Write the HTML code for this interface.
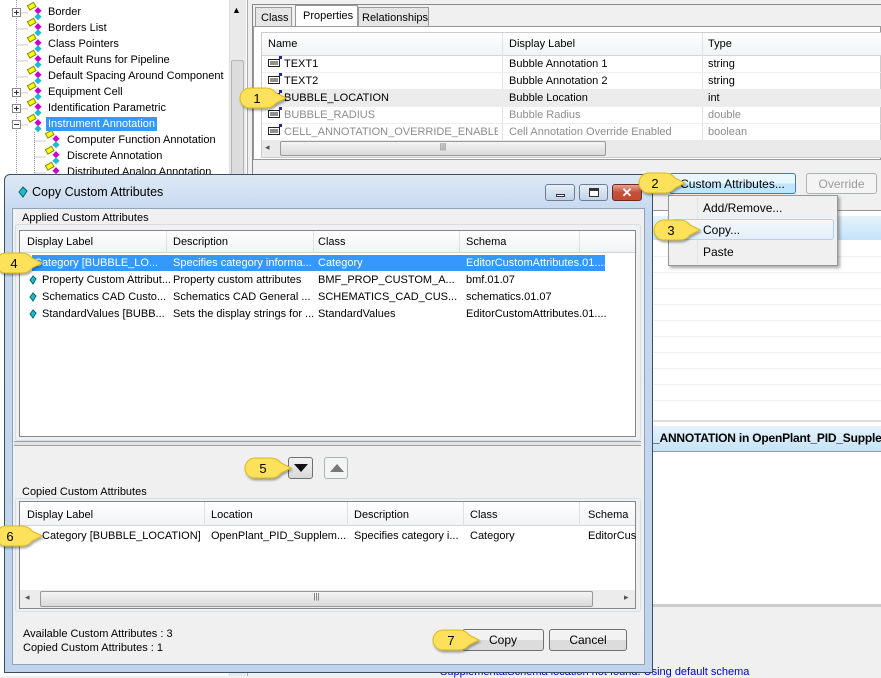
<!DOCTYPE html>
<html><head><style>
*{box-sizing:border-box;margin:0;padding:0}
body{width:881px;height:676px;position:relative;overflow:hidden;background:#f0f0f0;font-family:"Liberation Sans",sans-serif;font-size:11px;color:#000}
.a{position:absolute;white-space:nowrap}
.t{font-size:11px}
.gray{color:#8d8d8d}
.hdr{background:linear-gradient(#fff,#f2f3f5);border-bottom:1px solid #d5d5d5}
.btn{position:absolute;border:1px solid #707070;border-radius:3px;background:linear-gradient(#f2f2f2 50%,#dcdcdc 50%);text-align:center;font-size:12px}
</style></head><body>
<!-- left tree -->
<div class="a" style="left:0;top:0;width:248px;height:676px;background:#fff;border-right:1px solid #aaa"></div>
<div class="a" style="left:229px;top:0;width:17px;height:676px;background:#eaeaea;border-left:1px solid #ddd"></div>
<div class="a" style="left:231px;top:60px;width:13px;height:120px;background:#dcdcdc;border:1px solid #b5b5b5;border-radius:2px"></div>
<div class="a" style="left:232px;top:5px;font-size:9px">▲</div>
<svg class="a" style="left:0;top:0" width="230" height="180">
<g stroke="#999" stroke-dasharray="1,1" fill="none">
<path d="M16.5 0V180M16.5 13H28M16.5 29H28M16.5 45H28M16.5 61H28M16.5 77H28M16.5 93H28M16.5 109H28M16.5 125H28M34.5 132V180M34.5 141H46M34.5 157H46M34.5 173H46"/></g>
<g fill="#fff" stroke="#888"><rect x="12.5" y="8.5" width="8" height="8"/><rect x="12.5" y="88.5" width="8" height="8"/><rect x="12.5" y="104.5" width="8" height="8"/><rect x="12.5" y="120.5" width="8" height="8"/></g>
<g stroke="#333"><path d="M14 12.5h5M16.5 10v5M14 92.5h5M16.5 90v5M14 108.5h5M16.5 106v5M14 124.5h5"/></g>
<g id="n"><rect x="28" y="4" width="7" height="5" fill="#ff0" stroke="#880" transform="rotate(-30 31 6)"/><rect x="36" y="8" width="5" height="5" fill="#c0c" transform="rotate(45 38 10)"/><rect x="36" y="14" width="5" height="5" fill="#2bc" transform="rotate(45 38 16)"/></g>
<use href="#n" y="16"/><use href="#n" y="32"/><use href="#n" y="48"/><use href="#n" y="64"/><use href="#n" y="80"/><use href="#n" y="96"/><use href="#n" y="112"/>
<use href="#n" x="18" y="128"/><use href="#n" x="18" y="144"/><use href="#n" x="18" y="160"/>
</svg>
<div class="a t" style="left:48px;top:6px">Border</div>
<div class="a t" style="left:48px;top:22px">Borders List</div>
<div class="a t" style="left:48px;top:38px">Class Pointers</div>
<div class="a t" style="left:48px;top:54px">Default Runs for Pipeline</div>
<div class="a t" style="left:48px;top:70px">Default Spacing Around Component</div>
<div class="a t" style="left:48px;top:86px">Equipment Cell</div>
<div class="a t" style="left:48px;top:102px">Identification Parametric</div>
<div class="a t" style="left:46px;top:117px;background:#3399ff;color:#fff;padding:1px 2px">Instrument Annotation</div>
<div class="a t" style="left:67px;top:134px">Computer Function Annotation</div>
<div class="a t" style="left:67px;top:150px">Discrete Annotation</div>
<div class="a t" style="left:67px;top:166px">Distributed Analog Annotation</div>

<!-- right panel -->
<div class="a" style="left:252px;top:4px;width:629px;height:172px;background:#f0f0f0;border-left:1px solid #888;border-top:1px solid #888"></div>
<div class="a t" style="left:255px;top:7px;width:37px;height:20px;border:1px solid #999;background:#e5e5e5;padding:4px 5px">Class</div>
<div class="a t" style="left:295px;top:5px;width:63px;height:22px;border:1px solid #999;border-bottom:none;background:#fff;padding:4px 7px">Properties</div>
<div class="a t" style="left:358px;top:7px;width:71px;height:20px;border:1px solid #999;background:#e5e5e5;padding:4px 3px">Relationships</div>
<div class="a" style="left:253px;top:26px;width:628px;height:134px;background:#fff;border:1px solid #999"></div>
<div class="a" style="left:261px;top:32px;width:620px;height:126px;background:#fff;border:1px solid #ccc"></div>
<div class="a hdr" style="left:262px;top:33px;width:619px;height:23px"></div>
<div class="a" style="left:502px;top:33px;width:1px;height:107px;background:#e2e2e2"></div>
<div class="a" style="left:702px;top:33px;width:1px;height:107px;background:#e2e2e2"></div>
<div class="a" style="left:262px;top:89px;width:619px;height:17px;background:#ececec"></div>
<div class="a" style="left:262px;top:72px;width:619px;height:1px;background:#eee"></div>
<div class="a" style="left:262px;top:106px;width:619px;height:1px;background:#eee"></div>
<div class="a" style="left:262px;top:123px;width:619px;height:1px;background:#eee"></div>
<div class="a t" style="left:268px;top:38px">Name</div><div class="a t" style="left:509px;top:38px">Display Label</div><div class="a t" style="left:708px;top:38px">Type</div>
<svg class="a" style="left:266px;top:56px" width="18" height="85"><g id="p" fill="#fff" stroke="#222"><rect x="2.5" y="3.5" width="11" height="7"/><path d="M4 6h8M4 8h8" /><rect x="13" y="0" width="3" height="3" fill="#22a" stroke="none"/></g><use href="#p" y="17"/><use href="#p" y="34"/><use href="#p" y="51"/><use href="#p" y="68"/></svg>
<div class="a t" style="left:284px;top:58px">TEXT1</div><div class="a t" style="left:509px;top:58px">Bubble Annotation 1</div><div class="a t" style="left:708px;top:58px">string</div>
<div class="a t" style="left:284px;top:75px">TEXT2</div><div class="a t" style="left:509px;top:75px">Bubble Annotation 2</div><div class="a t" style="left:708px;top:75px">string</div>
<div class="a t" style="left:284px;top:92px">BUBBLE_LOCATION</div><div class="a t" style="left:509px;top:92px">Bubble Location</div><div class="a t" style="left:708px;top:92px">int</div>
<div class="a t gray" style="left:284px;top:109px">BUBBLE_RADIUS</div><div class="a t gray" style="left:509px;top:109px">Bubble Radius</div><div class="a t gray" style="left:708px;top:109px">double</div>
<div class="a t gray" style="left:284px;top:126px;width:214px;overflow:hidden">CELL_ANNOTATION_OVERRIDE_ENABLED</div><div class="a t gray" style="left:509px;top:126px">Cell Annotation Override Enabled</div><div class="a t gray" style="left:708px;top:126px">boolean</div>
<div class="a" style="left:262px;top:140px;width:619px;height:17px;background:#eaeaea"></div>
<div class="a" style="left:280px;top:141px;width:326px;height:15px;background:linear-gradient(#f4f4f4,#dadada);border:1px solid #999;border-radius:2px;font-size:8px;text-align:center;color:#555">|||</div>
<div class="a" style="left:265px;top:142px;font-size:9px;color:#555">◂</div>

<div class="btn" style="left:669px;top:173px;width:127px;height:21px;border-color:#3c7fb1;background:linear-gradient(#eaf6fd 50%,#bee6fd 50%);padding-top:3px">Custom Attributes...</div>
<div class="btn" style="left:806px;top:173px;width:71px;height:21px;border-color:#adb2b5;background:#f4f4f4;color:#9a9a9a;padding-top:3px">Override</div>

<!-- right lower list -->
<div class="a" style="left:651px;top:210px;width:230px;height:394px;background:#fff;border-top:1px solid #999"></div>
<div class="a" style="left:651px;top:216px;width:230px;height:24px;background:linear-gradient(#e6f3fc,#c4e3f8)"></div>
<svg class="a" style="left:651px;top:240px" width="230" height="180"><g stroke="#eef0f6"><path d="M0 16.5H230M0 32.5H230M0 48.5H230M0 64.5H230M0 80.5H230M0 96.5H230M0 112.5H230M0 128.5H230M0 144.5H230M0 160.5H230"/></g></svg>
<div class="a" style="left:651px;top:420px;width:230px;height:2px;background:#ddd"></div>
<div class="a" style="left:651px;top:426px;width:230px;height:26px;background:linear-gradient(#e6f3fc,#c4e3f8);border-bottom:1px solid #999;font-weight:bold;font-size:12px;padding:5px 0 0 2px;letter-spacing:-0.2px">_ANNOTATION in OpenPlant_PID_Supplemental</div>
<div class="a" style="left:651px;top:604px;width:230px;height:3px;background:#ccc"></div>
<div class="a" style="left:440px;top:666px;font-size:11px;color:#00c">SupplementalSchema location not found. Using default schema</div>

<!-- context menu -->
<div class="a" style="left:668px;top:195px;width:170px;height:71px;background:#f0f0f0;border:1px solid #979797;box-shadow:2px 2px 3px rgba(0,0,0,.35)"></div>
<div class="a" style="left:697px;top:197px;width:1px;height:67px;background:#e2e3e3"></div>
<div class="a" style="left:671px;top:219px;width:163px;height:21px;border:1px solid #a8d8f8;border-radius:3px;background:linear-gradient(#f3f8fd,#e4eef9)"></div>
<div class="a" style="left:703px;top:201px;font-size:12px">Add/Remove...</div>
<div class="a" style="left:703px;top:223px;font-size:12px">Copy...</div>
<div class="a" style="left:703px;top:245px;font-size:12px">Paste</div>

<!-- dialog -->
<div class="a" style="left:4px;top:174px;width:649px;height:499px;background:linear-gradient(#dde8f5,#c5d8ee 40px,#bfd4ec);border:1px solid #3a4e66;border-radius:6px 6px 0 0"></div>
<div class="a" style="left:12px;top:208px;width:633px;height:457px;background:#f0f0f0;border:1px solid #8ea4bc"></div>
<svg class="a" style="left:17px;top:186px" width="12" height="12"><path d="M2 6L6 1L10 5L6 11Z" fill="#2bc" stroke="#066"/></svg>
<div class="a" style="left:32px;top:185px;font-size:12.5px">Copy Custom Attributes</div>
<div class="a" style="left:545px;top:184px;width:30px;height:17px;border:1px solid #6d7f94;border-radius:3px;background:linear-gradient(#e6eef8,#c2d3e7)"><div class="a" style="left:10px;top:9px;width:9px;height:3px;border:1px solid #333;background:#fff"></div></div>
<div class="a" style="left:579px;top:184px;width:29px;height:17px;border:1px solid #6d7f94;border-radius:3px;background:linear-gradient(#e6eef8,#c2d3e7)"><div class="a" style="left:9px;top:3px;width:10px;height:9px;border:1px solid #333;border-top-width:3px;background:#fff"></div></div>
<div class="a" style="left:612px;top:184px;width:30px;height:17px;border:1px solid #6b2a22;border-radius:3px;background:linear-gradient(#e8a393,#c4503a 50%,#c24a33);color:#fff;font-weight:bold;font-size:13px;text-align:center;line-height:15px">✕</div>

<div class="a" style="left:15px;top:224px;width:626px;height:217px;border:1px solid #d5dfe5;border-radius:3px"></div>
<div class="a" style="left:20px;top:212px;background:#f0f0f0;padding:0 2px">Applied Custom Attributes</div>
<div class="a" style="left:19px;top:230px;width:617px;height:207px;background:#fff;border:1px solid #828790"></div>
<div class="a hdr" style="left:20px;top:231px;width:615px;height:22px"></div>
<div class="a" style="left:166px;top:231px;width:1px;height:22px;background:#e0e0e0"></div><div class="a" style="left:313px;top:231px;width:1px;height:22px;background:#e0e0e0"></div><div class="a" style="left:459px;top:231px;width:1px;height:22px;background:#e0e0e0"></div><div class="a" style="left:579px;top:231px;width:1px;height:22px;background:#e0e0e0"></div>
<div class="a" style="left:27px;top:236px">Display Label</div><div class="a" style="left:173px;top:236px">Description</div><div class="a" style="left:318px;top:236px">Class</div><div class="a" style="left:466px;top:236px">Schema</div>
<div class="a" style="left:32px;top:255px;width:573px;height:16px;background:#3399ff"></div>
<div class="a" style="left:34px;top:257px;color:#fff">Category [BUBBLE_LO...</div><div class="a" style="left:173px;top:257px;color:#fff">Specifies category informa...</div><div class="a" style="left:318px;top:257px;color:#fff">Category</div><div class="a" style="left:466px;top:257px;color:#fff">EditorCustomAttributes.01....</div>
<svg class="a" style="left:28px;top:275px" width="10" height="50"><g id="d" fill="#2bc" stroke="#066"><path d="M2 5L5 1L8 4L5 9Z"/></g><use href="#d" y="17"/><use href="#d" y="34"/></svg>
<div class="a" style="left:42px;top:274px">Property Custom Attribut...</div><div class="a" style="left:173px;top:274px">Property custom attributes</div><div class="a" style="left:318px;top:274px">BMF_PROP_CUSTOM_A...</div><div class="a" style="left:466px;top:274px">bmf.01.07</div>
<div class="a" style="left:42px;top:291px">Schematics CAD Custo...</div><div class="a" style="left:173px;top:291px">Schematics CAD General ...</div><div class="a" style="left:318px;top:291px">SCHEMATICS_CAD_CUS...</div><div class="a" style="left:466px;top:291px">schematics.01.07</div>
<div class="a" style="left:42px;top:308px">StandardValues [BUBB...</div><div class="a" style="left:173px;top:308px">Sets the display strings for ...</div><div class="a" style="left:318px;top:308px">StandardValues</div><div class="a" style="left:466px;top:308px">EditorCustomAttributes.01....</div>

<div class="a" style="left:14px;top:441px;width:627px;height:5px;border-top:1px solid #a0a0a0;border-bottom:1px solid #a0a0a0;background:#e3e3e3"></div>
<div class="a" style="left:288px;top:457px;width:25px;height:22px;border:1px solid #707070;border-radius:3px;background:linear-gradient(#f2f2f2,#d8d8d8)"><div class="a" style="left:5px;top:6px;width:0;height:0;border-left:7px solid transparent;border-right:7px solid transparent;border-top:8px solid #111"></div></div>
<div class="a" style="left:324px;top:457px;width:24px;height:22px;border:1px solid #adb2b5;border-radius:3px;background:#f4f4f4"><div class="a" style="left:5px;top:6px;width:0;height:0;border-left:7px solid transparent;border-right:7px solid transparent;border-bottom:8px solid #777"></div></div>

<div class="a" style="left:15px;top:498px;width:626px;height:114px;border:1px solid #d5dfe5;border-radius:3px"></div>
<div class="a" style="left:20px;top:486px;background:#f0f0f0;padding:0 2px">Copied Custom Attributes</div>
<div class="a" style="left:19px;top:501px;width:617px;height:108px;background:#fff;border:1px solid #828790"></div>
<div class="a hdr" style="left:20px;top:502px;width:615px;height:24px"></div>
<div class="a" style="left:204px;top:502px;width:1px;height:24px;background:#e0e0e0"></div><div class="a" style="left:347px;top:502px;width:1px;height:24px;background:#e0e0e0"></div><div class="a" style="left:463px;top:502px;width:1px;height:24px;background:#e0e0e0"></div><div class="a" style="left:579px;top:502px;width:1px;height:24px;background:#e0e0e0"></div>
<div class="a" style="left:27px;top:509px">Display Label</div><div class="a" style="left:211px;top:509px">Location</div><div class="a" style="left:354px;top:509px">Description</div><div class="a" style="left:470px;top:509px">Class</div><div class="a" style="left:588px;top:509px">Schema</div>
<div class="a" style="left:42px;top:530px">Category [BUBBLE_LOCATION]</div><div class="a" style="left:211px;top:530px">OpenPlant_PID_Supplem...</div><div class="a" style="left:354px;top:530px">Specifies category i...</div><div class="a" style="left:470px;top:530px">Category</div><div class="a" style="left:588px;top:530px">EditorCus</div>
<div class="a" style="left:20px;top:590px;width:615px;height:18px;background:#ececec"></div>
<div class="a" style="left:40px;top:591px;width:553px;height:16px;background:linear-gradient(#f4f4f4,#dadada);border:1px solid #999;border-radius:2px;font-size:8px;text-align:center;color:#555">|||</div>
<div class="a" style="left:25px;top:592px;font-size:9px;color:#555">◂</div><div class="a" style="left:624px;top:592px;font-size:9px;color:#555">▸</div>

<div class="a" style="left:23px;top:628px">Available Custom Attributes : 3</div>
<div class="a" style="left:23px;top:642px">Copied Custom Attributes : 1</div>
<div class="btn" style="left:462px;top:629px;width:82px;height:22px;padding-top:3px">Copy</div>
<div class="btn" style="left:549px;top:629px;width:78px;height:22px;padding-top:3px">Cancel</div>

<!-- callouts -->
<svg class="a" style="left:0;top:0" width="881" height="676">
<defs><filter id="s"><feDropShadow dx="1" dy="2" stdDeviation="1" flood-opacity=".35"/></filter>
<g id="c"><path d="M10 0H26Q32 0 36 5L46 10L36 15Q32 20 26 20H10A10 10 0 0 1 10 0Z" fill="#fde15a" stroke="#d9b820"/></g></defs>
<g filter="url(#s)" font-family="Liberation Sans" font-size="13" text-anchor="middle">
<use href="#c" x="240" y="88"/><text x="257" y="103">1</text>
<use href="#c" x="639" y="173"/><text x="655" y="188">2</text>
<use href="#c" x="654" y="220"/><text x="671" y="235">3</text>
<use href="#c" x="-4" y="253"/><text x="14" y="268">4</text>
<use href="#c" x="245" y="458"/><text x="263" y="473">5</text>
<use href="#c" x="-4" y="526"/><text x="10" y="541">6</text>
<use href="#c" x="433" y="630"/><text x="451" y="645">7</text>
</g></svg>
</body></html>
